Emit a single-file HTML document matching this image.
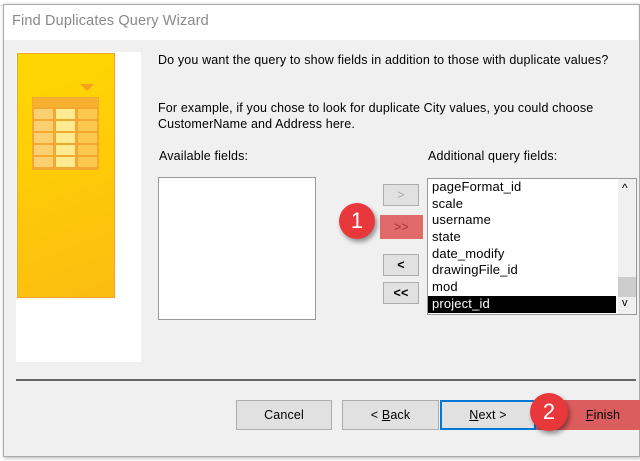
<!DOCTYPE html><html><head><style>
body{margin:0;width:640px;height:461px;overflow:hidden;background:#fff;font-family:"Liberation Sans",sans-serif;font-size:12.5px;letter-spacing:0.15px;color:#000;position:relative}
.a{position:absolute}
.btn{position:absolute;background:#e1e1e1;border:1px solid #adadad;box-sizing:border-box;text-align:center;font-size:12.5px}
.circ{position:absolute;border-radius:50%;background:#e8383c;color:#fff;font-size:22px;text-align:center;box-shadow:2px 3px 5px rgba(0,0,0,.4);letter-spacing:0}
.li{height:16.7px;line-height:16.7px;padding-left:4px;font-size:13px}
.g{position:absolute;width:20px;height:10px;background:#fcc860;border:1px solid #f5a830}
</style></head><body>
<div class="a" style="left:0;top:0;width:640px;height:5px;background:#fff;border-bottom:1px solid #ddd"></div>
<div class="a" style="left:3px;top:4px;width:635px;height:451px;background:#f0f0f0;border:1px solid #aaa;box-shadow:1px 1px 4px rgba(0,0,0,.3)"></div>
<div class="a" style="left:4px;top:5px;width:634px;height:35px;background:#fff"></div>
<div class="a" style="left:12px;top:13px;font-size:14.5px;color:#888">Find Duplicates Query Wizard</div>
<div class="a" style="left:16px;top:52px;width:125px;height:310px;background:#fff"></div>
<div class="a" style="left:17px;top:53px;width:98px;height:245px;border:1px solid #f7a030;background:linear-gradient(160deg,#ffd800,#fbbd10);box-sizing:border-box"></div>
<div class="a" style="left:80px;top:84px;width:0;height:0;border-left:7px solid transparent;border-right:7px solid transparent;border-top:7px solid #f5a020"></div>
<div class="a" style="left:32px;top:97px;width:67px;height:73px;background:#f5a830"></div>
<div class="a" style="left:33px;top:98px;width:65px;height:9px;background:#f7b030"></div>
<svg class="a" style="left:32px;top:97px" width="67" height="73">
<g fill="#fcd070"><rect x="2" y="12" width="19" height="10"/><rect x="2" y="24" width="19" height="10"/><rect x="2" y="36" width="19" height="10"/><rect x="2" y="48" width="19" height="10"/><rect x="2" y="60" width="19" height="10"/></g>
<g fill="#ffec90"><rect x="24" y="12" width="19" height="10"/><rect x="24" y="24" width="19" height="10"/><rect x="24" y="36" width="19" height="10"/><rect x="24" y="48" width="19" height="10"/><rect x="24" y="60" width="19" height="10"/></g>
<g fill="#fcc850"><rect x="46" y="12" width="19" height="10"/><rect x="46" y="24" width="19" height="10"/><rect x="46" y="36" width="19" height="10"/><rect x="46" y="48" width="19" height="10"/><rect x="46" y="60" width="19" height="10"/></g>
</svg>
<div class="a" style="left:158px;top:53px">Do you want the query to show fields in addition to those with duplicate values?</div>
<div class="a" style="left:158px;top:100px;line-height:16px">For example, if you chose to look for duplicate City values, you could choose<br>CustomerName and Address here.</div>
<div class="a" style="left:159px;top:149px">Available fields:</div>
<div class="a" style="left:428px;top:149px">Additional query fields:</div>
<div class="a" style="left:158px;top:177px;width:158px;height:143px;background:#fff;border:1px solid #999;box-sizing:border-box"></div>
<div class="a" style="left:427px;top:178px;width:210px;height:137px;background:#fff;border:1px solid #999;box-sizing:border-box;padding-top:0">
<div class="li">pageFormat_id</div><div class="li">scale</div><div class="li">username</div><div class="li">state</div><div class="li">date_modify</div><div class="li">drawingFile_id</div><div class="li">mod</div><div class="li" style="background:#000;color:#fff;width:184px">project_id</div>
<div class="a" style="left:190px;top:0;width:18px;height:135px;background:#f0f0f0"></div>
<div class="a" style="left:190px;top:98px;width:18px;height:20px;background:#cdcdcd"></div>
<div class="a" style="left:194px;top:2px;font-size:12px">^</div>
<div class="a" style="left:194px;top:118px;font-size:11px">v</div>
</div>
<div class="btn" style="left:383px;top:184px;width:36px;height:22px;line-height:20px;color:#aaa">&gt;</div>
<div class="btn" style="left:380px;top:215px;width:43px;height:24px;line-height:22px;background:#e06a6a;border-color:#e06a6a;color:#a33">&gt;&gt;</div>
<div class="btn" style="left:383px;top:254px;width:36px;height:22px;line-height:20px;font-weight:bold">&lt;</div>
<div class="btn" style="left:383px;top:282px;width:36px;height:22px;line-height:20px;font-weight:bold">&lt;&lt;</div>
<div class="circ" style="left:339px;top:203px;width:36px;height:36px;line-height:36px">1</div>
<div class="a" style="left:16px;top:379px;width:620px;height:2px;background:#666"></div>
<div class="btn" style="left:236px;top:400px;width:96px;height:30px;line-height:28px">Cancel</div>
<div class="btn" style="left:342px;top:400px;width:97px;height:30px;line-height:28px">&lt; <u>B</u>ack</div>
<div class="btn" style="left:440px;top:400px;width:96px;height:30px;line-height:26px;border:2px solid #0078d7"><u>N</u>ext &gt;</div>
<div class="btn" style="left:536px;top:400px;width:104px;height:30px;line-height:28px;background:#dc5d5d;border-color:#dc5d5d;padding-left:30px"><u>F</u>inish</div>
<div class="circ" style="left:530px;top:393px;width:38px;height:38px;line-height:38px">2</div>
</body></html>
